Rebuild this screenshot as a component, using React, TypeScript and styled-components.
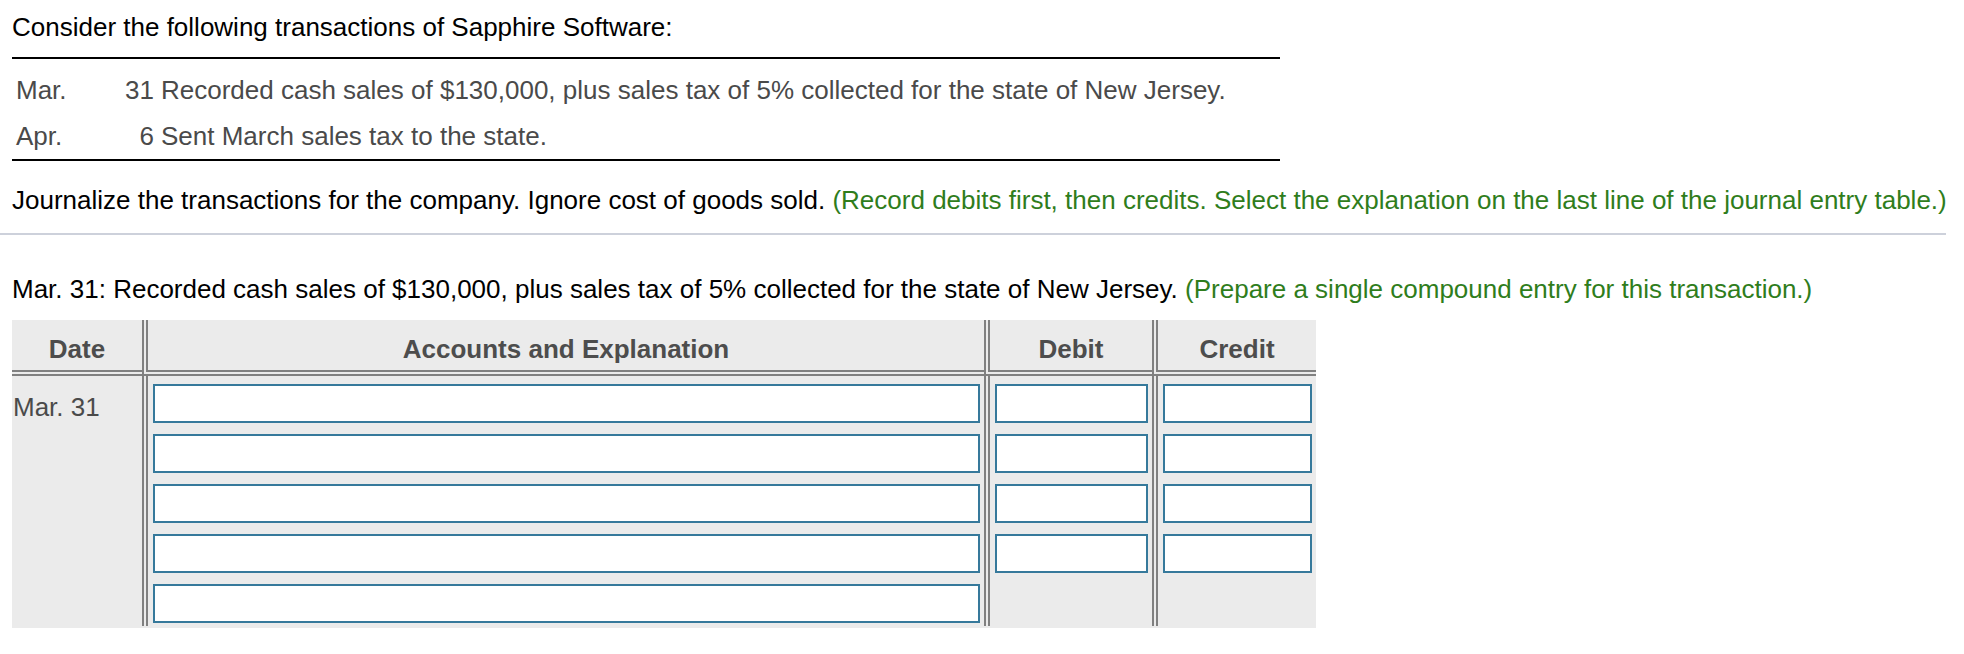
import React from 'react';
import styled, { createGlobalStyle } from 'styled-components';

const GlobalStyle = createGlobalStyle`
  body {
    margin: 0;
    background: #ffffff;
    font-family: "Liberation Sans", Arial, Helvetica, sans-serif;
    font-size: 26px;
    color: #000000;
  }
`;

const Page = styled.div`
  padding: 12px 0 0 12px;
  line-height: 30px;
`;

const Para = styled.p<{ $top?: number }>`
  margin: ${(p) => p.$top ?? 0}px 0 0 0;
  white-space: nowrap;
`;

const Hint = styled.span`
  color: #2f7d1c;
`;

const TxTable = styled.div`
  margin-top: 15px;
  width: 1268px;
  border-top: 2px solid #000000;
  border-bottom: 2px solid #000000;
  padding-top: 8px;
`;

const TxRow = styled.div`
  display: grid;
  grid-template-columns: 86px 52px 1fr;
  height: 46px;
  align-items: center;
  color: #4a4a4a;
  padding-left: 4px;
`;

const Day = styled.span`
  text-align: right;
`;

const Desc = styled.span`
  padding-left: 7px;
  white-space: nowrap;
`;

const Divider = styled.div`
  margin: 18px 0 0 -12px;
  width: 1946px;
  height: 2px;
  background: #cdd1db;
`;

const Journal = styled.div`
  margin-top: 16px;
  width: 1304px;
  display: grid;
  grid-template-columns: 130px 842px 168px 164px;
  background: #ebebeb;
  padding-bottom: 2px;
`;

const HeadCell = styled.div<{ $sep?: boolean }>`
  box-sizing: border-box;
  height: 56px;
  padding-top: 8px;
  border-bottom: 6px double #808080;
  border-left: ${(p) => (p.$sep ? '6px double #808080' : 'none')};
  display: flex;
  align-items: center;
  justify-content: center;
  font-weight: bold;
  color: #4d4d4d;
`;

const DateCell = styled.div`
  grid-row: span 5;
  padding: 16px 0 0 1px;
  color: #4a4a4a;
`;

const Cell = styled.div`
  box-sizing: border-box;
  height: 50px;
  padding: 8px 4px 3px 5px;
  border-left: 6px double #808080;
`;

const Field = styled.input`
  display: block;
  box-sizing: border-box;
  width: 100%;
  height: 39px;
  margin: 0;
  border: 2px solid #36799b;
  background: #ffffff;
  font: inherit;
  outline: none;
`;

const lines = [true, true, true, true, false];

const App = () => {
  return (
    <Page>
      <GlobalStyle />
      <Para>Consider the following transactions of Sapphire Software:</Para>
      <TxTable>
        <TxRow>
          <span>Mar.</span>
          <Day>31</Day>
          <Desc>Recorded cash sales of $130,000, plus sales tax of 5% collected for the state of New Jersey.</Desc>
        </TxRow>
        <TxRow>
          <span>Apr.</span>
          <Day>6</Day>
          <Desc>Sent March sales tax to the state.</Desc>
        </TxRow>
      </TxTable>
      <Para $top={24}>
        Journalize the transactions for the company. Ignore cost of goods sold.{' '}
        <Hint>(Record debits first, then credits. Select the explanation on the last line of the journal entry table.)</Hint>
      </Para>
      <Divider />
      <Para $top={39}>
        Mar. 31: Recorded cash sales of $130,000, plus sales tax of 5% collected for the state of New Jersey.{' '}
        <Hint>(Prepare a single compound entry for this transaction.)</Hint>
      </Para>
      <Journal>
        <HeadCell>Date</HeadCell>
        <HeadCell $sep>Accounts and Explanation</HeadCell>
        <HeadCell $sep>Debit</HeadCell>
        <HeadCell $sep>Credit</HeadCell>
        <DateCell>Mar. 31</DateCell>
        {lines.map((amounts, i) => (
          <React.Fragment key={i}>
            <Cell>
              <Field />
            </Cell>
            <Cell>{amounts && <Field />}</Cell>
            <Cell>{amounts && <Field />}</Cell>
          </React.Fragment>
        ))}
      </Journal>
    </Page>
  );
};

export default App;
